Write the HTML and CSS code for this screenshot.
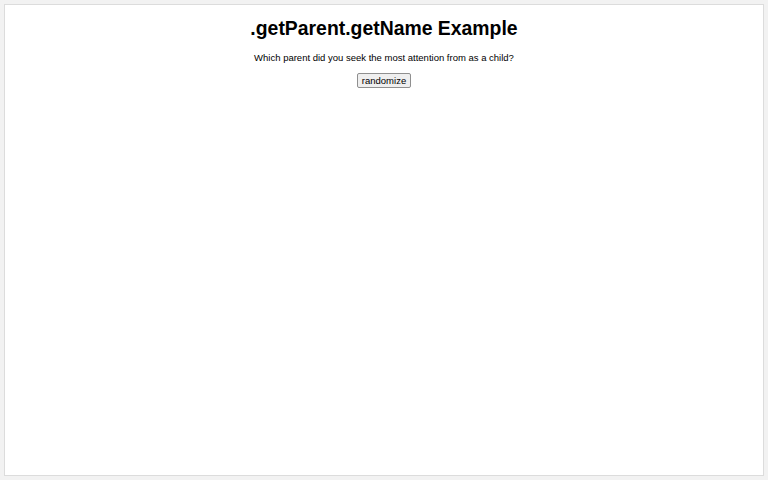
FILE: index.html
```html
<!DOCTYPE html>
<html>
<head>
<meta charset="utf-8">
<link rel="stylesheet" href="styles.css">
</head>
<body>
<div class="frame">
  <h1 class="title">.getParent.getName Example</h1>
  <p class="question">Which parent did you seek the most attention from as a child?</p>
  <div class="actions"><button class="btn">randomize</button></div>
</div>
</body>
</html>
```
FILE: styles.css
```css
html, body {
  margin: 0;
  height: 100%;
}
body {
  background: #f2f2f2;
  padding: 4px;
  box-sizing: border-box;
  font-family: "Liberation Sans", Arial, sans-serif;
}
.frame {
  height: 100%;
  box-sizing: border-box;
  background: #fff;
  border: 1px solid #dcdcdc;
  text-align: center;
  padding-top: 12px;
}
.title {
  margin: 0;
  font-size: 19.4px;
  font-weight: bold;
  color: #000;
  line-height: 23px;
}
.question {
  margin: 12px 0 0;
  font-size: 9.5px;
  line-height: 12px;
  color: #000;
}
.actions {
  margin-top: 9px;
  line-height: 0;
}
.btn {
  font-family: "Liberation Sans", Arial, sans-serif;
  font-size: 9.5px;
  line-height: 11px;
  padding: 1px 4px;
  color: #000;
  background: #efefef;
  border: 1px solid #8f8f8f;
  border-radius: 2px;
  vertical-align: top;
}
```
